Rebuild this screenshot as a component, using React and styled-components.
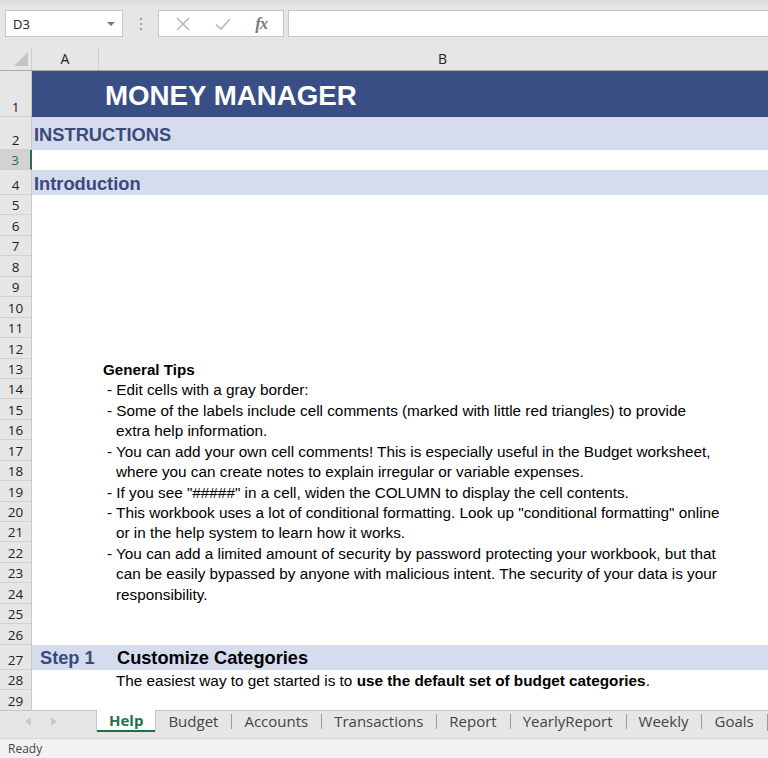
import React from 'react';
import styled, { createGlobalStyle } from 'styled-components';

const GlobalStyle = createGlobalStyle`
  html, body { margin: 0; padding: 0; }
  body {
    width: 768px;
    height: 758px;
    overflow: hidden;
    background: #e6e6e6;
    font-family: "Liberation Sans", Arial, sans-serif;
  }
`;

const rows = [
  { n: 1, h: 46, band: 'dark', cells: [{ kind: 'title', text: 'MONEY MANAGER' }] },
  { n: 2, h: 33, band: 'light', cells: [{ kind: 'section', text: 'INSTRUCTIONS', lift: 5 }] },
  { n: 3, h: 20, selected: true },
  { n: 4, h: 25, band: 'light', cells: [{ kind: 'section', text: 'Introduction', lift: 1 }] },
  { n: 5 }, { n: 6 }, { n: 7 }, { n: 8 }, { n: 9 }, { n: 10 }, { n: 11 }, { n: 12 },
  { n: 13, cells: [{ kind: 'tipsHead', text: 'General Tips' }] },
  { n: 14, cells: [{ kind: 'bullet', text: '- Edit cells with a gray border:' }] },
  { n: 15, cells: [{ kind: 'bullet', text: '- Some of the labels include cell comments (marked with little red triangles) to provide' }] },
  { n: 16, cells: [{ kind: 'cont', text: 'extra help information.' }] },
  { n: 17, cells: [{ kind: 'bullet', text: '- You can add your own cell comments! This is especially useful in the Budget worksheet,' }] },
  { n: 18, cells: [{ kind: 'cont', text: 'where you can create notes to explain irregular or variable expenses.' }] },
  { n: 19, cells: [{ kind: 'bullet', text: '- If you see "#####" in a cell, widen the COLUMN to display the cell contents.' }] },
  { n: 20, cells: [{ kind: 'bullet', text: '- This workbook uses a lot of conditional formatting. Look up "conditional formatting" online' }] },
  { n: 21, cells: [{ kind: 'cont', text: 'or in the help system to learn how it works.' }] },
  { n: 22, cells: [{ kind: 'bullet', text: '- You can add a limited amount of security by password protecting your workbook, but that' }] },
  { n: 23, cells: [{ kind: 'cont', text: 'can be easily bypassed by anyone with malicious intent. The security of your data is your' }] },
  { n: 24, cells: [{ kind: 'cont', text: 'responsibility.' }] },
  { n: 25 }, { n: 26 },
  { n: 27, h: 25, band: 'light', cells: [{ kind: 'step' }] },
  { n: 28, cells: [{ kind: 'intro' }] },
  { n: 29 },
];

const tabs = ['Help', 'Budget', 'Accounts', 'Transactions', 'Report', 'YearlyReport', 'Weekly', 'Goals'];

export default function App() {
  return (
    <>
      <GlobalStyle />
      <Window>
        <FormulaBar>
          <NameBox>
            <span>D3</span>
            <Caret />
          </NameBox>
          <Grip>
            <i /><i /><i />
          </Grip>
          <FxButtons>
            <svg width="16" height="16" viewBox="0 0 16 16">
              <path d="M2 2 L14 14 M14 2 L2 14" stroke="#b8b8b8" strokeWidth="1.6" fill="none" />
            </svg>
            <svg width="18" height="16" viewBox="0 0 18 16">
              <path d="M2 8.5 L7 13 L16 3" stroke="#b8b8b8" strokeWidth="1.6" fill="none" />
            </svg>
            <FxLabel>fx</FxLabel>
          </FxButtons>
          <FormulaInput />
        </FormulaBar>

        <ColumnHeaders>
          <Corner>
            <svg width="14" height="14" viewBox="0 0 14 14">
              <path d="M14 0 L14 14 L0 14 Z" fill="#c4c4c4" />
            </svg>
          </Corner>
          <ColHead $w="67px">A</ColHead>
          <ColHead $w="688px">B</ColHead>
        </ColumnHeaders>

        <Sheet>
          {rows.map(r => (
            <Row key={r.n} $h={r.h || 20.45}>
              <RowHead $selected={r.selected}>{r.n}</RowHead>
              <Cells $band={r.band}>
                {(r.cells || []).map((c, i) => renderCell(c, i))}
              </Cells>
            </Row>
          ))}
        </Sheet>

        <TabBar>
          <Arrows>
            <svg width="6" height="9" viewBox="0 0 6 9"><path d="M6 0 L0 4.5 L6 9 Z" fill="#c8c8c8" /></svg>
            <svg width="6" height="9" viewBox="0 0 6 9"><path d="M0 0 L6 4.5 L0 9 Z" fill="#c8c8c8" /></svg>
          </Arrows>
          {tabs.map((t, i) => (
            <Tab key={t} $active={i === 0} $sep={i > 1}>{t}</Tab>
          ))}
          <TabEnd />
        </TabBar>

        <StatusBar>Ready</StatusBar>
      </Window>
    </>
  );
}

function renderCell(c, i) {
  switch (c.kind) {
    case 'title':
      return <Title key={i}>{c.text}</Title>;
    case 'section':
      return <Section key={i} $lift={c.lift}>{c.text}</Section>;
    case 'tipsHead':
      return <TipsHead key={i}>{c.text}</TipsHead>;
    case 'bullet':
      return <Tip key={i} $indent={107}>{c.text}</Tip>;
    case 'cont':
      return <Tip key={i} $indent={116}>{c.text}</Tip>;
    case 'step':
      return (
        <StepLine key={i}>
          <StepNo>Step 1</StepNo>
          <StepName>Customize Categories</StepName>
        </StepLine>
      );
    case 'intro':
      return (
        <Tip key={i} $indent={116}>
          The easiest way to get started is to <b>use the default set of budget categories</b>.
        </Tip>
      );
    default:
      return null;
  }
}

const Window = styled.div`
  width: 768px;
  height: 758px;
  display: flex;
  flex-direction: column;
  background: #e6e6e6;
`;

const FormulaBar = styled.div`
  height: 47px;
  box-sizing: border-box;
  padding: 10px 0 0 5px;
  display: flex;
  align-items: flex-start;
  background: linear-gradient(#dcdcdc 0, #e6e6e6 8px);
`;

const NameBox = styled.div`
  width: 118px;
  height: 27px;
  box-sizing: border-box;
  border: 1px solid #c6c6c6;
  background: #fff;
  display: flex;
  align-items: center;
  justify-content: space-between;
  padding: 0 7px 0 7px;
  font-family: "Open Sans", "Noto Sans", sans-serif;
  font-size: 13px;
  color: #222;
`;

const Caret = styled.span`
  width: 0;
  height: 0;
  border-left: 4px solid transparent;
  border-right: 4px solid transparent;
  border-top: 4px solid #777;
`;

const Grip = styled.div`
  width: 35px;
  height: 27px;
  display: flex;
  flex-direction: column;
  align-items: center;
  justify-content: center;
  gap: 3px;

  i {
    display: block;
    width: 2px;
    height: 2px;
    background: #9a9a9a;
  }
`;

const FxButtons = styled.div`
  width: 126px;
  height: 27px;
  box-sizing: border-box;
  border: 1px solid #c6c6c6;
  background: #fff;
  display: flex;
  align-items: center;
  justify-content: space-around;
  padding: 0 4px;
`;

const FxLabel = styled.span`
  font-family: "Liberation Serif", serif;
  font-style: italic;
  font-weight: bold;
  font-size: 17px;
  color: #7a7a7a;
  letter-spacing: -1px;
`;

const FormulaInput = styled.div`
  flex: 1;
  height: 27px;
  margin-left: 4px;
  box-sizing: border-box;
  border: 1px solid #c6c6c6;
  border-right: none;
  background: #fff;
`;

const ColumnHeaders = styled.div`
  height: 24px;
  display: flex;
  overflow: hidden;
  border-bottom: 1px solid #ababab;
  box-sizing: border-box;
`;

const Corner = styled.div`
  width: 32px;
  flex: none;
  box-sizing: border-box;
  border-right: 1px solid #cfcfcf;
  display: flex;
  align-items: flex-end;
  justify-content: flex-end;
  padding: 0 3px 4px 0;
`;

const ColHead = styled.div`
  width: ${({ $w }) => $w};
  flex: none;
  box-sizing: border-box;
  border-right: 1px solid #cfcfcf;
  display: flex;
  align-items: center;
  justify-content: center;
  font-family: "Open Sans", "Noto Sans", sans-serif;
  font-size: 14px;
  color: #222;
`;

const Sheet = styled.div`
  height: 639px;
  overflow: hidden;
  background: #fff;
  border-bottom: 1px solid #c6c6c6;
`;

const Row = styled.div`
  height: ${({ $h }) => $h}px;
  display: flex;
`;

const RowHead = styled.div`
  width: 32px;
  flex: none;
  box-sizing: border-box;
  background: ${({ $selected }) => ($selected ? '#d2d2d2' : '#e6e6e6')};
  border-bottom: 1px solid #d0d0d0;
  border-right: ${({ $selected }) => ($selected ? '2px solid #217346' : '1px solid #c8c8c8')};
  display: flex;
  align-items: flex-end;
  justify-content: center;
  padding-bottom: 0;
  font-family: "Open Sans", "Noto Sans", sans-serif;
  font-size: 13.5px;
  line-height: 17px;
  color: ${({ $selected }) => ($selected ? '#217346' : '#222')};
`;

const Cells = styled.div`
  flex: 1;
  display: flex;
  align-items: flex-end;
  background: ${({ $band }) =>
    $band === 'dark' ? '#3a4e86' : $band === 'light' ? '#d5dcee' : '#fff'};
`;

const Title = styled.div`
  padding: 0 0 5px 73px;
  font-weight: bold;
  font-size: 27.7px;
  line-height: 32px;
  color: #fff;
`;

const Section = styled.div`
  padding: 0 0 ${({ $lift }) => $lift || 1}px 2px;
  font-weight: bold;
  font-size: 18.3px;
  line-height: 21px;
  color: #3a4a7c;
`;

const TipsHead = styled.div`
  padding: 0 0 1px 71px;
  font-weight: bold;
  font-size: 15.2px;
  line-height: 17px;
  color: #000;
`;

const Tip = styled.div`
  padding: 0 0 1px ${({ $indent }) => $indent - 32}px;
  font-size: 15.3px;
  line-height: 17px;
  color: #000;
  white-space: nowrap;
`;

const StepLine = styled.div`
  display: flex;
  align-items: baseline;
  padding: 0 0 1px 8px;
  font-weight: bold;
  font-size: 18.2px;
  line-height: 21px;
`;

const StepNo = styled.span`
  width: 77px;
  color: #3a4a7c;
`;

const StepName = styled.span`
  color: #000;
`;

const TabBar = styled.div`
  height: 28px;
  box-sizing: border-box;
  padding-bottom: 6px;
  display: flex;
  align-items: stretch;
  background: #e6e6e6;
  border-bottom: 1px solid #d6d6d6;
  font-family: "Open Sans", "Noto Sans", sans-serif;
  font-size: 15px;
`;

const Arrows = styled.div`
  width: 97px;
  flex: none;
  display: flex;
  align-items: center;
  gap: 20px;
  padding-left: 25px;
  box-sizing: border-box;
`;

const Tab = styled.div`
  position: relative;
  display: flex;
  align-items: center;
  padding: 0 ${({ $active }) => ($active ? '12px' : '13px')};
  margin-top: ${({ $active }) => ($active ? '-1px' : '0')};
  background: ${({ $active }) => ($active ? '#fff' : 'transparent')};
  color: ${({ $active }) => ($active ? '#217346' : '#444')};
  font-weight: ${({ $active }) => ($active ? 'bold' : 'normal')};
  border-bottom: ${({ $active }) => ($active ? '2px solid #217346' : '2px solid transparent')};
  box-shadow: ${({ $active }) => ($active ? '1px 0 0 #c6c6c6, -1px 0 0 #c6c6c6' : 'none')};

  &::before {
    content: '';
    display: ${({ $sep }) => ($sep ? 'block' : 'none')};
    position: absolute;
    left: 0;
    top: 3px;
    bottom: 1px;
    width: 1px;
    background: #9c9c9c;
  }
`;

const TabEnd = styled.div`
  width: 1px;
  margin: 3px 0 1px 0;
  background: #9c9c9c;
`;

const StatusBar = styled.div`
  flex: 1;
  background: #f3f2f1;
  display: flex;
  align-items: center;
  padding-left: 8px;
  font-family: "Open Sans", "Noto Sans", sans-serif;
  font-size: 12px;
  color: #444;
`;
